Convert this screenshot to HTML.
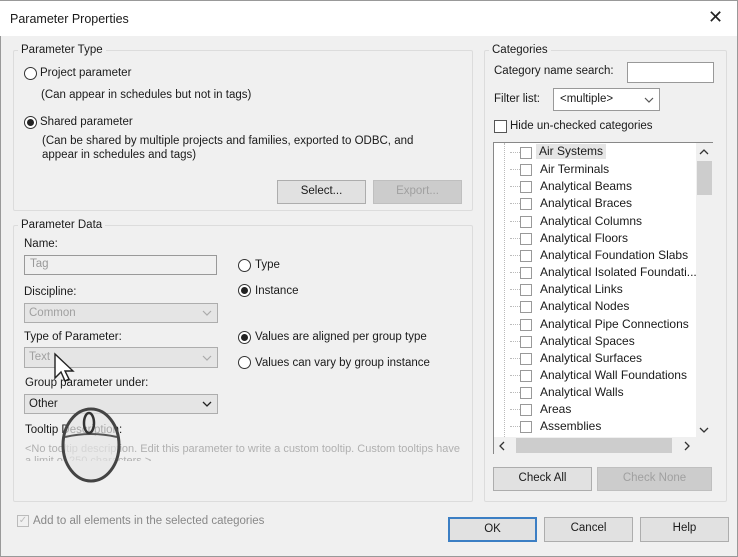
<!DOCTYPE html>
<html><head><meta charset="utf-8"><style>
*{box-sizing:border-box;margin:0;padding:0}
body{width:738px;height:557px;background:#f0f0f0;font-family:"Liberation Sans",sans-serif;font-size:11.5px;color:#1a1a1a;position:relative;overflow:hidden}
.a{position:absolute;white-space:nowrap}
.grp{position:absolute;border:1px solid #dcdcdc;border-radius:2px}
.lbl{position:absolute;background:#f0f0f0;padding:0 3px;line-height:12px}
.btn{position:absolute;background:#e1e1e1;border:1px solid #adadad;text-align:center;line-height:21px}
.dis{color:#a0a0a0;background:#cccccc;border-color:#bfbfbf}
.rad{position:absolute;width:13px;height:13px;border:1px solid #333;border-radius:50%;background:#fff}
.rad.on::after{content:"";position:absolute;left:2px;top:2px;width:7px;height:7px;border-radius:50%;background:#222}
.inp{position:absolute;background:#fff;border:1px solid #7a7a7a}
.sel{position:absolute;border:1px solid #adadad;background:#e5e5e5;padding-left:4px;line-height:18px}
.chev{position:absolute;right:5px;top:50%;margin-top:-3px}
.cb{position:absolute;width:12px;height:12px;border:1px solid #555;background:#fff}
</style></head><body>
<div class="a" style="left:0;top:0;width:738px;height:36px;background:#fff;border-top:1px solid #999"></div>
<div class="a" style="left:10px;top:12px;font-size:12.5px">Parameter Properties</div>
<div class="a" style="left:708px;top:7px;font-size:18px;color:#222">✕</div>
<div class="a" style="left:0;top:36px;width:1px;height:521px;background:#999"></div>
<div class="a" style="left:737px;top:0;width:1px;height:557px;background:#999"></div>
<div class="a" style="left:0;top:556px;width:738px;height:1px;background:#999"></div>

<div class="grp" style="left:13px;top:50px;width:460px;height:161px"></div>
<div class="lbl" style="left:18px;top:44px">Parameter Type</div>
<div class="rad" style="left:24px;top:67px"></div>
<div class="a" style="left:40px;top:67px">Project parameter</div>
<div class="a" style="left:41px;top:89px">(Can appear in schedules but not in tags)</div>
<div class="rad on" style="left:24px;top:116px"></div>
<div class="a" style="left:40px;top:116px">Shared parameter</div>
<div class="a" style="left:42px;top:135px">(Can be shared by multiple projects and families, exported to ODBC, and</div>
<div class="a" style="left:42px;top:149px">appear in schedules and tags)</div>
<div class="btn" style="left:277px;top:180px;width:89px;height:24px">Select...</div>
<div class="btn dis" style="left:373px;top:180px;width:89px;height:24px">Export...</div>

<div class="grp" style="left:13px;top:225px;width:460px;height:277px"></div>
<div class="lbl" style="left:18px;top:219px">Parameter Data</div>
<div class="a" style="left:24px;top:238px">Name:</div>
<div class="inp" style="left:24px;top:255px;width:193px;height:20px;background:#f0f0f0;border-color:#999;color:#999;padding:2px 5px">Tag</div>
<div class="a" style="left:24px;top:286px">Discipline:</div>
<div class="sel dis" style="left:24px;top:303px;width:194px;height:20px">Common<svg class="chev" width="10" height="6"><polyline points="1,1 5,5 9,1" fill="none" stroke="#aaa" stroke-width="1.2"/></svg></div>
<div class="a" style="left:24px;top:331px">Type of Parameter:</div>
<div class="sel dis" style="left:24px;top:347px;width:194px;height:21px">Text<svg class="chev" width="10" height="6"><polyline points="1,1 5,5 9,1" fill="none" stroke="#aaa" stroke-width="1.2"/></svg></div>
<div class="a" style="left:25px;top:377px">Group parameter under:</div>
<div class="sel" style="left:24px;top:394px;width:194px;height:20px">Other<svg class="chev" width="10" height="6"><polyline points="1,1 5,5 9,1" fill="none" stroke="#222" stroke-width="1.3"/></svg></div>
<div class="a" style="left:25px;top:424px">Tooltip Description:</div>
<div class="a" style="left:25px;top:443px;color:#b0b0b0;font-size:11px">&lt;No tooltip description. Edit this parameter to write a custom tooltip. Custom tooltips have</div>
<div class="a" style="left:25px;top:455px;height:6px;overflow:hidden;color:#b0b0b0;font-size:11px">a limit of 250 characters.&gt;</div>
<div class="rad" style="left:238px;top:259px"></div><div class="a" style="left:255px;top:259px">Type</div>
<div class="rad on" style="left:238px;top:284px"></div><div class="a" style="left:255px;top:285px">Instance</div>
<div class="rad on" style="left:238px;top:331px"></div><div class="a" style="left:255px;top:331px">Values are aligned per group type</div>
<div class="rad" style="left:238px;top:356px"></div><div class="a" style="left:255px;top:357px">Values can vary by group instance</div>

<svg class="a" style="left:50px;top:352px" width="30" height="32" viewBox="0 0 30 32"><path d="M5 2 L5 26 L11 20 L15 29 L19 27 L15 19 L23 19 Z" fill="#fff" stroke="#222" stroke-width="1.4"/></svg>
<svg class="a" style="left:58px;top:405px" width="66" height="80" viewBox="0 0 66 80"><ellipse cx="33" cy="40" rx="28" ry="36" fill="rgba(230,230,230,0.7)" stroke="#444" stroke-width="3"/><path d="M7 32 Q33 26 59 32" fill="none" stroke="#555" stroke-width="2"/><ellipse cx="31" cy="18" rx="5" ry="10" fill="none" stroke="#333" stroke-width="2.5"/></svg>

<div class="cb" style="left:17px;top:515px;border-color:#bbb;background:#f0f0f0;color:#bbb;font-size:10px;line-height:10px;text-align:center">✓</div>
<div class="a" style="left:33px;top:515px;color:#888">Add to all elements in the selected categories</div>

<div class="grp" style="left:484px;top:50px;width:243px;height:452px"></div>
<div class="lbl" style="left:489px;top:44px">Categories</div>
<div class="a" style="left:494px;top:65px">Category name search:</div>
<div class="inp" style="left:627px;top:62px;width:87px;height:21px;border-color:#999"></div>
<div class="a" style="left:494px;top:93px">Filter list:</div>
<div class="inp" style="left:553px;top:88px;width:107px;height:23px;border-color:#999;padding:4px 6px">&lt;multiple&gt;<svg class="chev" width="10" height="6"><polyline points="1,1 5,5 9,1" fill="none" stroke="#555" stroke-width="1.2"/></svg></div>
<div class="cb" style="left:494px;top:120px;width:13px;height:13px"></div>
<div class="a" style="left:510px;top:120px">Hide un-checked categories</div>
<div class="a" style="left:493px;top:142px;width:220px;height:312px;background:#fff;border:1px solid #888;border-width:1px 0 0 1px;overflow:hidden">
 <div class="a" style="left:10px;top:0;width:0;height:294px;border-left:1px dotted #bbb"></div>
 <div class="a" style="left:202px;top:0;width:17px;height:294px;background:#f0f0f0"></div>
 <svg class="a" style="left:205px;top:6px" width="10" height="6"><polyline points="1,5 5,1 9,5" fill="none" stroke="#333" stroke-width="1.3"/></svg>
 <div class="a" style="left:203px;top:18px;width:15px;height:34px;background:#cdcdcd"></div>
 <svg class="a" style="left:205px;top:284px" width="10" height="6"><polyline points="1,1 5,5 9,1" fill="none" stroke="#333" stroke-width="1.3"/></svg>
 <div class="a" style="left:0;top:294px;width:220px;height:17px;background:#f0f0f0"></div>
 <svg class="a" style="left:5px;top:298px" width="6" height="10"><polyline points="5,1 1,5 5,9" fill="none" stroke="#333" stroke-width="1.3"/></svg>
 <div class="a" style="left:22px;top:295px;width:156px;height:15px;background:#cdcdcd"></div>
 <svg class="a" style="left:190px;top:298px" width="6" height="10"><polyline points="1,1 5,5 1,9" fill="none" stroke="#333" stroke-width="1.3"/></svg>
</div>
<div class="btn" style="left:493px;top:467px;width:99px;height:24px">Check All</div>
<div class="btn dis" style="left:597px;top:467px;width:115px;height:24px">Check None</div>

<div class="btn" style="left:448px;top:517px;width:89px;height:25px;border:2px solid #3c7fc4">OK</div>
<div class="btn" style="left:544px;top:517px;width:89px;height:25px">Cancel</div>
<div class="btn" style="left:640px;top:517px;width:89px;height:25px">Help</div>

<div class="a" style="left:493px;top:144px;width:200px;font-size:12px">
<span class="a" style="left:17px;top:8px;width:10px;border-top:1px dotted #bbb"></span><span class="cb" style="left:27px;top:3px;border-color:#999"></span><span class="a" style="left:43px;top:0;background:#e5e5e5;padding:0 3px;line-height:15px">Air Systems</span>
<script>
var n=["Air Terminals","Analytical Beams","Analytical Braces","Analytical Columns","Analytical Floors","Analytical Foundation Slabs","Analytical Isolated Foundati...","Analytical Links","Analytical Nodes","Analytical Pipe Connections","Analytical Spaces","Analytical Surfaces","Analytical Wall Foundations","Analytical Walls","Areas","Assemblies"];
for(var i=0;i<n.length;i++){var t=17.15*(i+1);document.write('<span class="a" style="left:17px;top:'+(t+8)+'px;width:10px;border-top:1px dotted #bbb"></span><span class="cb" style="left:27px;top:'+(t+3)+'px;border-color:#999"></span><span class="a" style="left:47px;top:'+(t+1)+'px;line-height:14px">'+n[i]+'</span>');}
</script>
</div>
</body></html>
